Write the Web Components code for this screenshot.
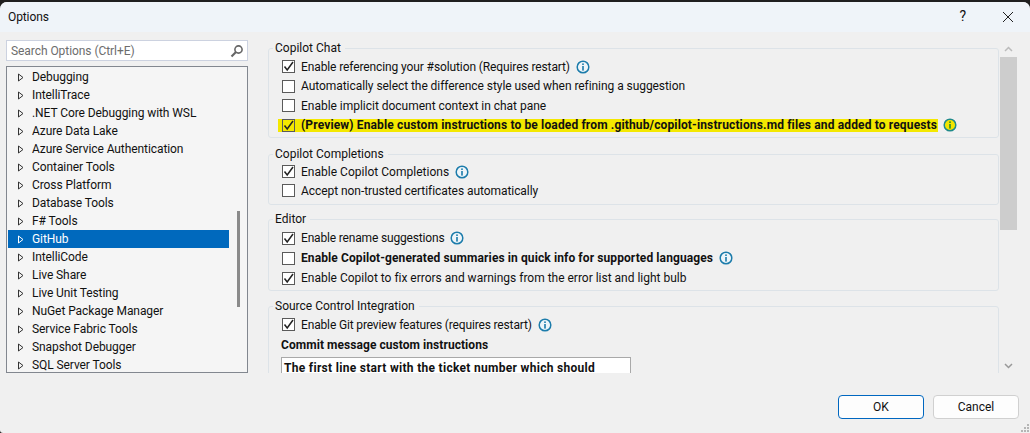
<!DOCTYPE html>
<html>
<head>
<meta charset="utf-8">
<style>
  html, body { margin: 0; padding: 0; background: #f0f0f0; }
  body { font-family: Roboto, "Noto Sans", sans-serif; font-size: 12px; color: #111; }
</style>
</head>
<body>
<options-dialog>
  <tree-row slot="tree">Debugging</tree-row>
  <tree-row slot="tree">IntelliTrace</tree-row>
  <tree-row slot="tree">.NET Core Debugging with WSL</tree-row>
  <tree-row slot="tree">Azure Data Lake</tree-row>
  <tree-row slot="tree">Azure Service Authentication</tree-row>
  <tree-row slot="tree">Container Tools</tree-row>
  <tree-row slot="tree">Cross Platform</tree-row>
  <tree-row slot="tree">Database Tools</tree-row>
  <tree-row slot="tree">F# Tools</tree-row>
  <tree-row slot="tree" selected>GitHub</tree-row>
  <tree-row slot="tree">IntelliCode</tree-row>
  <tree-row slot="tree">Live Share</tree-row>
  <tree-row slot="tree">Live Unit Testing</tree-row>
  <tree-row slot="tree">NuGet Package Manager</tree-row>
  <tree-row slot="tree">Service Fabric Tools</tree-row>
  <tree-row slot="tree">Snapshot Debugger</tree-row>
  <tree-row slot="tree">SQL Server Tools</tree-row>

  <option-group slot="panel" label="Copilot Chat" style="height:98px;margin-bottom:8px">
    <option-check checked info style="--ls:-0.11px">Enable referencing your #solution (Requires restart)</option-check>
    <option-check style="--ls:-0.06px">Automatically select the difference style used when refining a suggestion</option-check>
    <option-check style="--ls:-0.02px">Enable implicit document context in chat pane</option-check>
    <option-check checked info highlight style="--ls:0.14px">(Preview) Enable custom instructions to be loaded from .github/copilot-instructions.md files and added to requests</option-check>
  </option-group>
  <option-group slot="panel" label="Copilot Completions" style="height:59px;margin-bottom:6px;--row-h:19px;--top:0px">
    <option-check checked info style="--ls:0.02px">Enable Copilot Completions</option-check>
    <option-check style="--ls:-0.06px">Accept non-trusted certificates automatically</option-check>
  </option-group>
  <option-group slot="panel" label="Editor" style="height:80px;margin-bottom:7px;--row-h:20px">
    <option-check checked info style="--ls:-0.17px">Enable rename suggestions</option-check>
    <option-check bold info style="--ls:0.1px">Enable Copilot-generated summaries in quick info for supported languages</option-check>
    <option-check checked style="--ls:-0.01px">Enable Copilot to fix errors and warnings from the error list and light bulb</option-check>
  </option-group>
  <option-group slot="panel" label="Source Control Integration" style="height:110px;margin-bottom:0">
    <option-check checked info style="--ls:-0.15px">Enable Git preview features (requires restart)</option-check>
    <commit-box label="Commit message custom instructions">The first line start with the ticket number which should</commit-box>
  </option-group>
</options-dialog>

<script>
class InfoIcon extends HTMLElement {
  connectedCallback() {
    this.attachShadow({ mode: 'open' });
    const hl = this.hasAttribute('highlight');
    const fg = hl ? '#2a8a2a' : '#1c7cab';
    this.shadowRoot.innerHTML = `
      <style>
        :host { display: inline-flex; width: 14px; height: 14px; flex-shrink: 0; }
      </style>
      <svg width="14" height="14" viewBox="0 0 14 14">
        <circle cx="7" cy="7" r="5.8" fill="${hl ? '#f2e500' : '#eef5f9'}" stroke="${hl ? '#1f8a8a' : '#1c7cab'}" stroke-width="1.5"/>
        <rect x="6.2" y="6" width="1.6" height="4.6" fill="${fg}"/>
        <rect x="6.2" y="3.4" width="1.6" height="1.6" fill="${fg}"/>
      </svg>`;
  }
}
customElements.define('info-icon', InfoIcon);

class OptionCheck extends HTMLElement {
  connectedCallback() {
    this.attachShadow({ mode: 'open' });
    const checked = this.hasAttribute('checked');
    const hl = this.hasAttribute('highlight');
    this.shadowRoot.innerHTML = `
      <style>
        :host { display: flex; align-items: center; height: var(--row-h, 19.5px); }
        .box {
          width: 13px; height: 13px; box-sizing: border-box; flex-shrink: 0;
          border: 1px solid #5a5a5a; background: ${hl ? 'transparent' : '#fff'};
          display: flex; align-items: center; justify-content: center;
        }
        .row { display: flex; align-items: center; height: 13px; padding: 0 1px 0 4px; margin-left: -4px; }
        .row.hl { background: #f4e800; }
        .text { margin-left: 6px; white-space: nowrap; letter-spacing: var(--ls, 0); }
        .text.bold { font-weight: 700; }
        .after { margin-left: 5px; }
      </style>
      <div class="row ${hl ? 'hl' : ''}">
        <span class="box">${checked ? `<svg width="11" height="11" viewBox="0 0 11 11"><path d="M1.5 5.5 4.2 9 10 1" fill="none" stroke="#222" stroke-width="1.5"/></svg>` : ''}</span>
        <span class="text ${hl || this.hasAttribute('bold') ? 'bold' : ''}"><slot></slot></span>
      </div>
      ${this.hasAttribute('info') ? `<info-icon class="after" ${hl ? 'highlight' : ''}></info-icon>` : ''}`;
  }
}
customElements.define('option-check', OptionCheck);

class OptionGroup extends HTMLElement {
  connectedCallback() {
    this.attachShadow({ mode: 'open' });
    this.shadowRoot.innerHTML = `
      <style>
        :host { display: block; box-sizing: border-box; flex-shrink: 0; }
        fieldset {
          box-sizing: border-box; height: 100%; margin: 0; padding: 0 0 0 6px;
          border: 1px solid #dde3e8; border-radius: 3px; min-width: 0; width: 731px;
        }
        legend { padding: 0 4px 0 2px; margin-left: -2px; line-height: 16px; letter-spacing: 0; }
        .rows { padding: var(--top, 1px) 0 0 7px; }
      </style>
      <fieldset>
        <legend>${this.getAttribute('label')}</legend>
        <div class="rows"><slot></slot></div>
      </fieldset>`;
  }
}
customElements.define('option-group', OptionGroup);

class CommitBox extends HTMLElement {
  connectedCallback() {
    this.attachShadow({ mode: 'open' });
    this.shadowRoot.innerHTML = `
      <style>
        :host { display: block; font-weight: 700; margin-left: -1px; }
        .label { line-height: 18px; margin-top: 1px; letter-spacing: 0.06px; }
        .box {
          width: 350px; height: 60px; box-sizing: border-box; margin-top: 3px;
          border: 1px solid #a9a9a9; background: #fff; padding: 1px 2px;
          white-space: nowrap; line-height: 18px; letter-spacing: 0.3px;
        }
      </style>
      <div class="label">${this.getAttribute('label')}</div>
      <div class="box"><slot></slot></div>`;
  }
}
customElements.define('commit-box', CommitBox);

class TreeRow extends HTMLElement {
  connectedCallback() {
    this.attachShadow({ mode: 'open' });
    const sel = this.hasAttribute('selected');
    this.shadowRoot.innerHTML = `
      <style>
        :host { display: flex; align-items: center; height: 18px; white-space: nowrap; letter-spacing: -0.08px;
          background: ${sel ? '#0069bd' : 'transparent'}; color: ${sel ? '#fff' : '#111'}; }
        svg { margin: 0 7px 0 8px; flex-shrink: 0; }
      </style>
      <svg width="9" height="9" viewBox="0 0 9 9"><path d="M2.5 1 7 4.5 2.5 8Z" fill="none" stroke="${sel ? '#fff' : '#333'}"/></svg>
      <slot></slot>`;
  }
}
customElements.define('tree-row', TreeRow);

class ScrollTrack extends HTMLElement {
  connectedCallback() {
    this.attachShadow({ mode: 'open' });
    this.shadowRoot.innerHTML = `
      <style>
        :host { display: flex; flex-direction: column; width: 17px; align-items: center; }
        svg { flex-shrink: 0; }
        .track { flex: 1; width: 100%; }
        .thumb { width: 100%; height: 173px; background: #cdcdcd; }
      </style>
      <svg width="9" height="16" viewBox="0 0 9 16"><path d="M1 10 4.5 6.5 8 10" fill="none" stroke="#bbb" stroke-width="1.5"/></svg>
      <div class="track"><div class="thumb"></div></div>
      <svg width="9" height="17" viewBox="0 0 9 17"><path d="M1 7 4.5 10.5 8 7" fill="none" stroke="#999" stroke-width="1.5"/></svg>`;
  }
}
customElements.define('scroll-track', ScrollTrack);

class OptionsDialog extends HTMLElement {
  connectedCallback() {
    this.attachShadow({ mode: 'open' });
    this.shadowRoot.innerHTML = `
      <style>
        :host { display: block; width: 1030px; height: 433px; background: #1f1f1f; overflow: hidden; }
        .win { height: 431px; margin-top: 2px; background: #f0f0f0; border-radius: 7px 7px 0 3px; display: flex; flex-direction: column; overflow: hidden; }
        .title { height: 30px; flex-shrink: 0; background: #eff4f9; display: flex; align-items: center; padding: 0 16px 0 8px; }
        .title .name { flex: 1; letter-spacing: -0.1px; }
        .help { font-size: 14px; margin-right: 36px; margin-bottom: 2px; }
        .main { display: flex; height: 342px; flex-shrink: 0; }
        .left { width: 242px; margin: 8px 0 0 6px; flex-shrink: 0; }
        .search {
          height: 21px; box-sizing: border-box; border: 1px solid #ccd2e0; background: #fff;
          display: flex; align-items: center; padding: 0 3px 0 4px; color: #6d6d6d; letter-spacing: -0.06px;
        }
        .search span { flex: 1; }
        .tree {
          height: 307px; margin-top: 5px; box-sizing: border-box; border: 1px solid #82878f; background: #f5f5f5;
          display: flex; overflow: hidden; padding: 1px 0 0 1px;
        }
        .rows { width: 221px; flex-shrink: 0; }
        .tbar { flex: 1; padding-top: 143px; display: flex; justify-content: center; }
        .tbar div { width: 3px; height: 96px; background: #8a8a8a; }
        .panel { width: 731px; margin: 8px 0 0 20px; height: 333px; overflow: hidden; display: flex; flex-direction: column; flex-shrink: 0; }
        scroll-track { height: 333px; margin: 9px 0 0 1px; }
        .foot { flex: 1; display: flex; justify-content: flex-end; gap: 9px; padding: 21px 11px 0 0; position: relative; }
        button {
          font: inherit; color: #111; width: 86px; height: 24px; background: #fdfdfd; box-sizing: border-box;
          border: 1px solid #d0d0d0; border-radius: 4px; padding: 0;
        }
        button.def { border: 1.5px solid #0067c0; }
        .grip { position: absolute; right: 0; bottom: 0; }
      </style>
      <div class="win">
        <div class="title">
          <span class="name">Options</span>
          <span class="help">?</span>
          <svg width="12" height="12" viewBox="0 0 12 12"><path d="M1 1 11 11M11 1 1 11" stroke="#222" stroke-width="1"/></svg>
        </div>
        <div class="main">
          <div class="left">
            <div class="search">
              <span>Search Options (Ctrl+E)</span>
              <svg width="14" height="14" viewBox="0 0 14 14"><circle cx="8.5" cy="5.5" r="3.6" fill="none" stroke="#666" stroke-width="1.6"/><path d="M6 8 1.5 12.5" stroke="#666" stroke-width="2.2"/></svg>
            </div>
            <div class="tree">
              <div class="rows"><slot name="tree"></slot></div>
              <div class="tbar"><div></div></div>
            </div>
          </div>
          <div class="panel"><slot name="panel"></slot></div>
          <scroll-track></scroll-track>
        </div>
        <div class="foot">
          <button class="def">OK</button>
          <button>Cancel</button>
          <svg class="grip" width="10" height="10" viewBox="0 0 10 10" fill="#b5b5b5">
            <rect x="7" y="1" width="2" height="2"/><rect x="4" y="4" width="2" height="2"/><rect x="7" y="4" width="2" height="2"/>
            <rect x="1" y="7" width="2" height="2"/><rect x="4" y="7" width="2" height="2"/><rect x="7" y="7" width="2" height="2"/>
          </svg>
        </div>
      </div>`;
  }
}
customElements.define('options-dialog', OptionsDialog);
</script>
</body>
</html>
